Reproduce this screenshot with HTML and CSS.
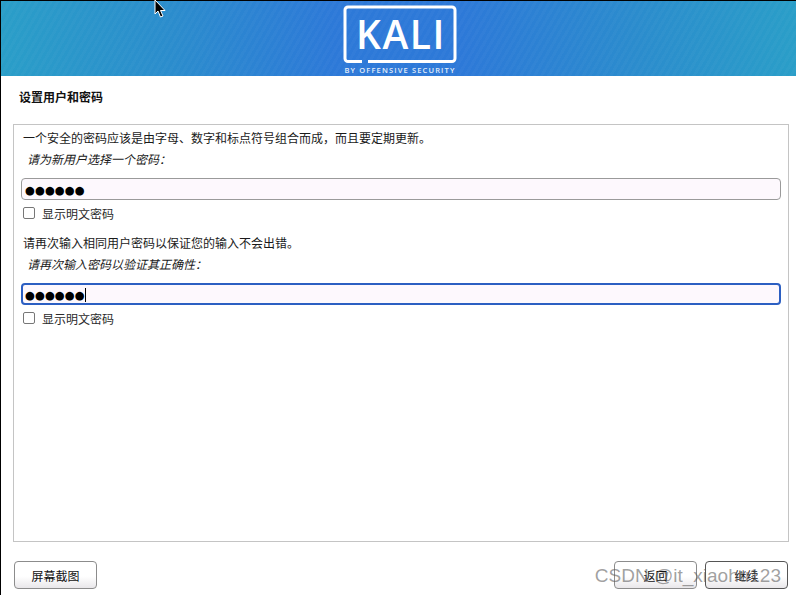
FILE: index.html
```html
<!DOCTYPE html>
<html lang="zh">
<head>
<meta charset="utf-8">
<title>设置用户和密码</title>
<link rel="stylesheet" href="styles.css">
</head>
<body>
<div class="window">
  <header class="banner">
    <svg class="logo" width="114" height="70" viewBox="0 0 114 70">
      <path class="frame" d="M19 55.500H5a3 3 0 0 1-3-3V4a3 3 0 0 1 3-3h104a3 3 0 0 1 3 3v48.500a3 3 0 0 1-3 3H25" transform="translate(0 1)"/>
      <text class="logo-word" x="58" y="43.500" text-anchor="middle">KALI</text>
      <text class="logo-sub" x="57" y="68" text-anchor="middle">BY OFFENSIVE SECURITY</text>
    </svg>
  </header>
  <h1 class="title">设置用户和密码</h1>
  <main class="panel">
    <p class="note">一个安全的密码应该是由字母、数字和标点符号组合而成，而且要定期更新。</p>
    <p class="prompt">请为新用户选择一个密码：</p>
    <div class="field">●●●●●●</div>
    <label class="check"><span class="box"></span>显示明文密码</label>
    <p class="note note-second">请再次输入相同用户密码以保证您的输入不会出错。</p>
    <p class="prompt">请再次输入密码以验证其正确性：</p>
    <div class="field field-focus">●●●●●●<span class="caret"></span></div>
    <label class="check"><span class="box"></span>显示明文密码</label>
  </main>
  <footer class="actions">
    <button class="btn btn-shot">屏幕截图</button>
    <span class="spacer"></span>
    <button class="btn">返回</button>
    <button class="btn btn-next">继续</button>
  </footer>
  <svg class="pointer" width="12" height="18" viewBox="0 0 12 18"><path d="M1 0v14l3-3 2.500 6 2.500-1-2.500-5.500H11z"/></svg>
  <div class="watermark">CSDN @it_xiaohu123</div>
</div>
</body>
</html>
```
FILE: styles.css
```css
* { box-sizing: border-box; }
html, body { margin: 0; padding: 0; }
body {
  width: 796px;
  height: 595px;
  overflow: hidden;
  background: #fff;
  font-family: "Noto Sans CJK SC", "Noto Sans", sans-serif;
  font-size: 12px;
  color: #1a1a1a;
}
.window {
  position: relative;
  width: 796px;
  height: 595px;
  display: flex;
  flex-direction: column;
  border-left: 1px solid #000;
  border-top: 1px solid #000;
}
.banner {
  height: 75px;
  flex: none;
  display: flex;
  justify-content: center;
  background:
    repeating-linear-gradient(120deg, rgba(255,255,255,.025) 0 3px, rgba(255,255,255,0) 3px 6px),
    linear-gradient(90deg, #2a9ec8 0%, #2b8ccd 22%, #2d79d8 42%, #2d79d8 58%, #2b8ccd 80%, #2a9ec8 100%);
}
.logo { margin-top: 4px; margin-left: 3px; flex: none; }
.frame { fill: none; stroke: #fff; stroke-width: 3; }
.logo-word { font-family: "Open Sans", sans-serif; font-size: 39px; font-weight: 600; fill: #fff; letter-spacing: 1.500px; }
.logo-sub { font-family: "Open Sans", sans-serif; font-size: 7.500px; font-weight: 600; fill: #e4eefa; letter-spacing: 1.150px; }
.title {
  flex: none;
  margin: 13px 0 0 18px;
  height: 35px;
  font-size: 12px;
  line-height: 16px;
  font-weight: 700;
  color: #111;
}
.panel {
  flex: none;
  width: 776px;
  height: 418px;
  margin-left: 12px;
  border: 1px solid #c4c4c4;
  padding: 4px 7px 0;
}
.note { margin: 0; line-height: 17px; height: 17px; padding-left: 2px; }
.note-second { margin-top: 12px; }
.prompt { margin: 4px 0 0; line-height: 17px; height: 17px; padding-left: 6px; font-style: italic; }
.field {
  margin-top: 11px;
  width: 760px;
  height: 22px;
  border: 1px solid #9a9a9a;
  border-radius: 4px;
  background: #fdf8fd;
  padding: 2px 0 0 3px;
  font-family: "DejaVu Sans", sans-serif;
  font-size: 11.400px;
  line-height: 18px;
  color: #000;
  display: flex;
  align-items: center;
  white-space: nowrap;
}
.field-focus { border: 2px solid #2c5fc2; padding: 1px 0 0 2px; }
.caret { width: 1.500px; height: 14px; background: #000; }
.check {
  display: flex;
  align-items: center;
  margin: 4px 0 0 2px;
  height: 18px;
  color: #2a2a2a;
}
.box {
  width: 12px;
  height: 12px;
  margin-right: 7px;
  border: 1px solid #777;
  border-radius: 2px;
  background: #fff;
}
.actions {
  flex: none;
  display: flex;
  gap: 8px;
  margin: 19px 8px 0 13px;
  align-items: flex-start;
}
.spacer { flex: 1; }
.btn {
  width: 83px;
  height: 28px;
  padding: 0;
  border: 1px solid #8c8c8c;
  border-radius: 4px;
  background: linear-gradient(#fff 0%, #fff 55%, #e9e7ea 100%);
  font: inherit;
  color: #111;
}
.btn-next { border-color: #555; }
.pointer { position: absolute; left: 153px; top: -1px; }
.pointer path { fill: #000; stroke: #fff; stroke-width: 1; }
.watermark {
  position: absolute;
  right: 15px;
  top: 562px;
  font-family: "Liberation Sans", sans-serif;
  font-size: 19px;
  line-height: 26px;
  color: rgba(90, 90, 90, .58);
  white-space: nowrap;
}
```
